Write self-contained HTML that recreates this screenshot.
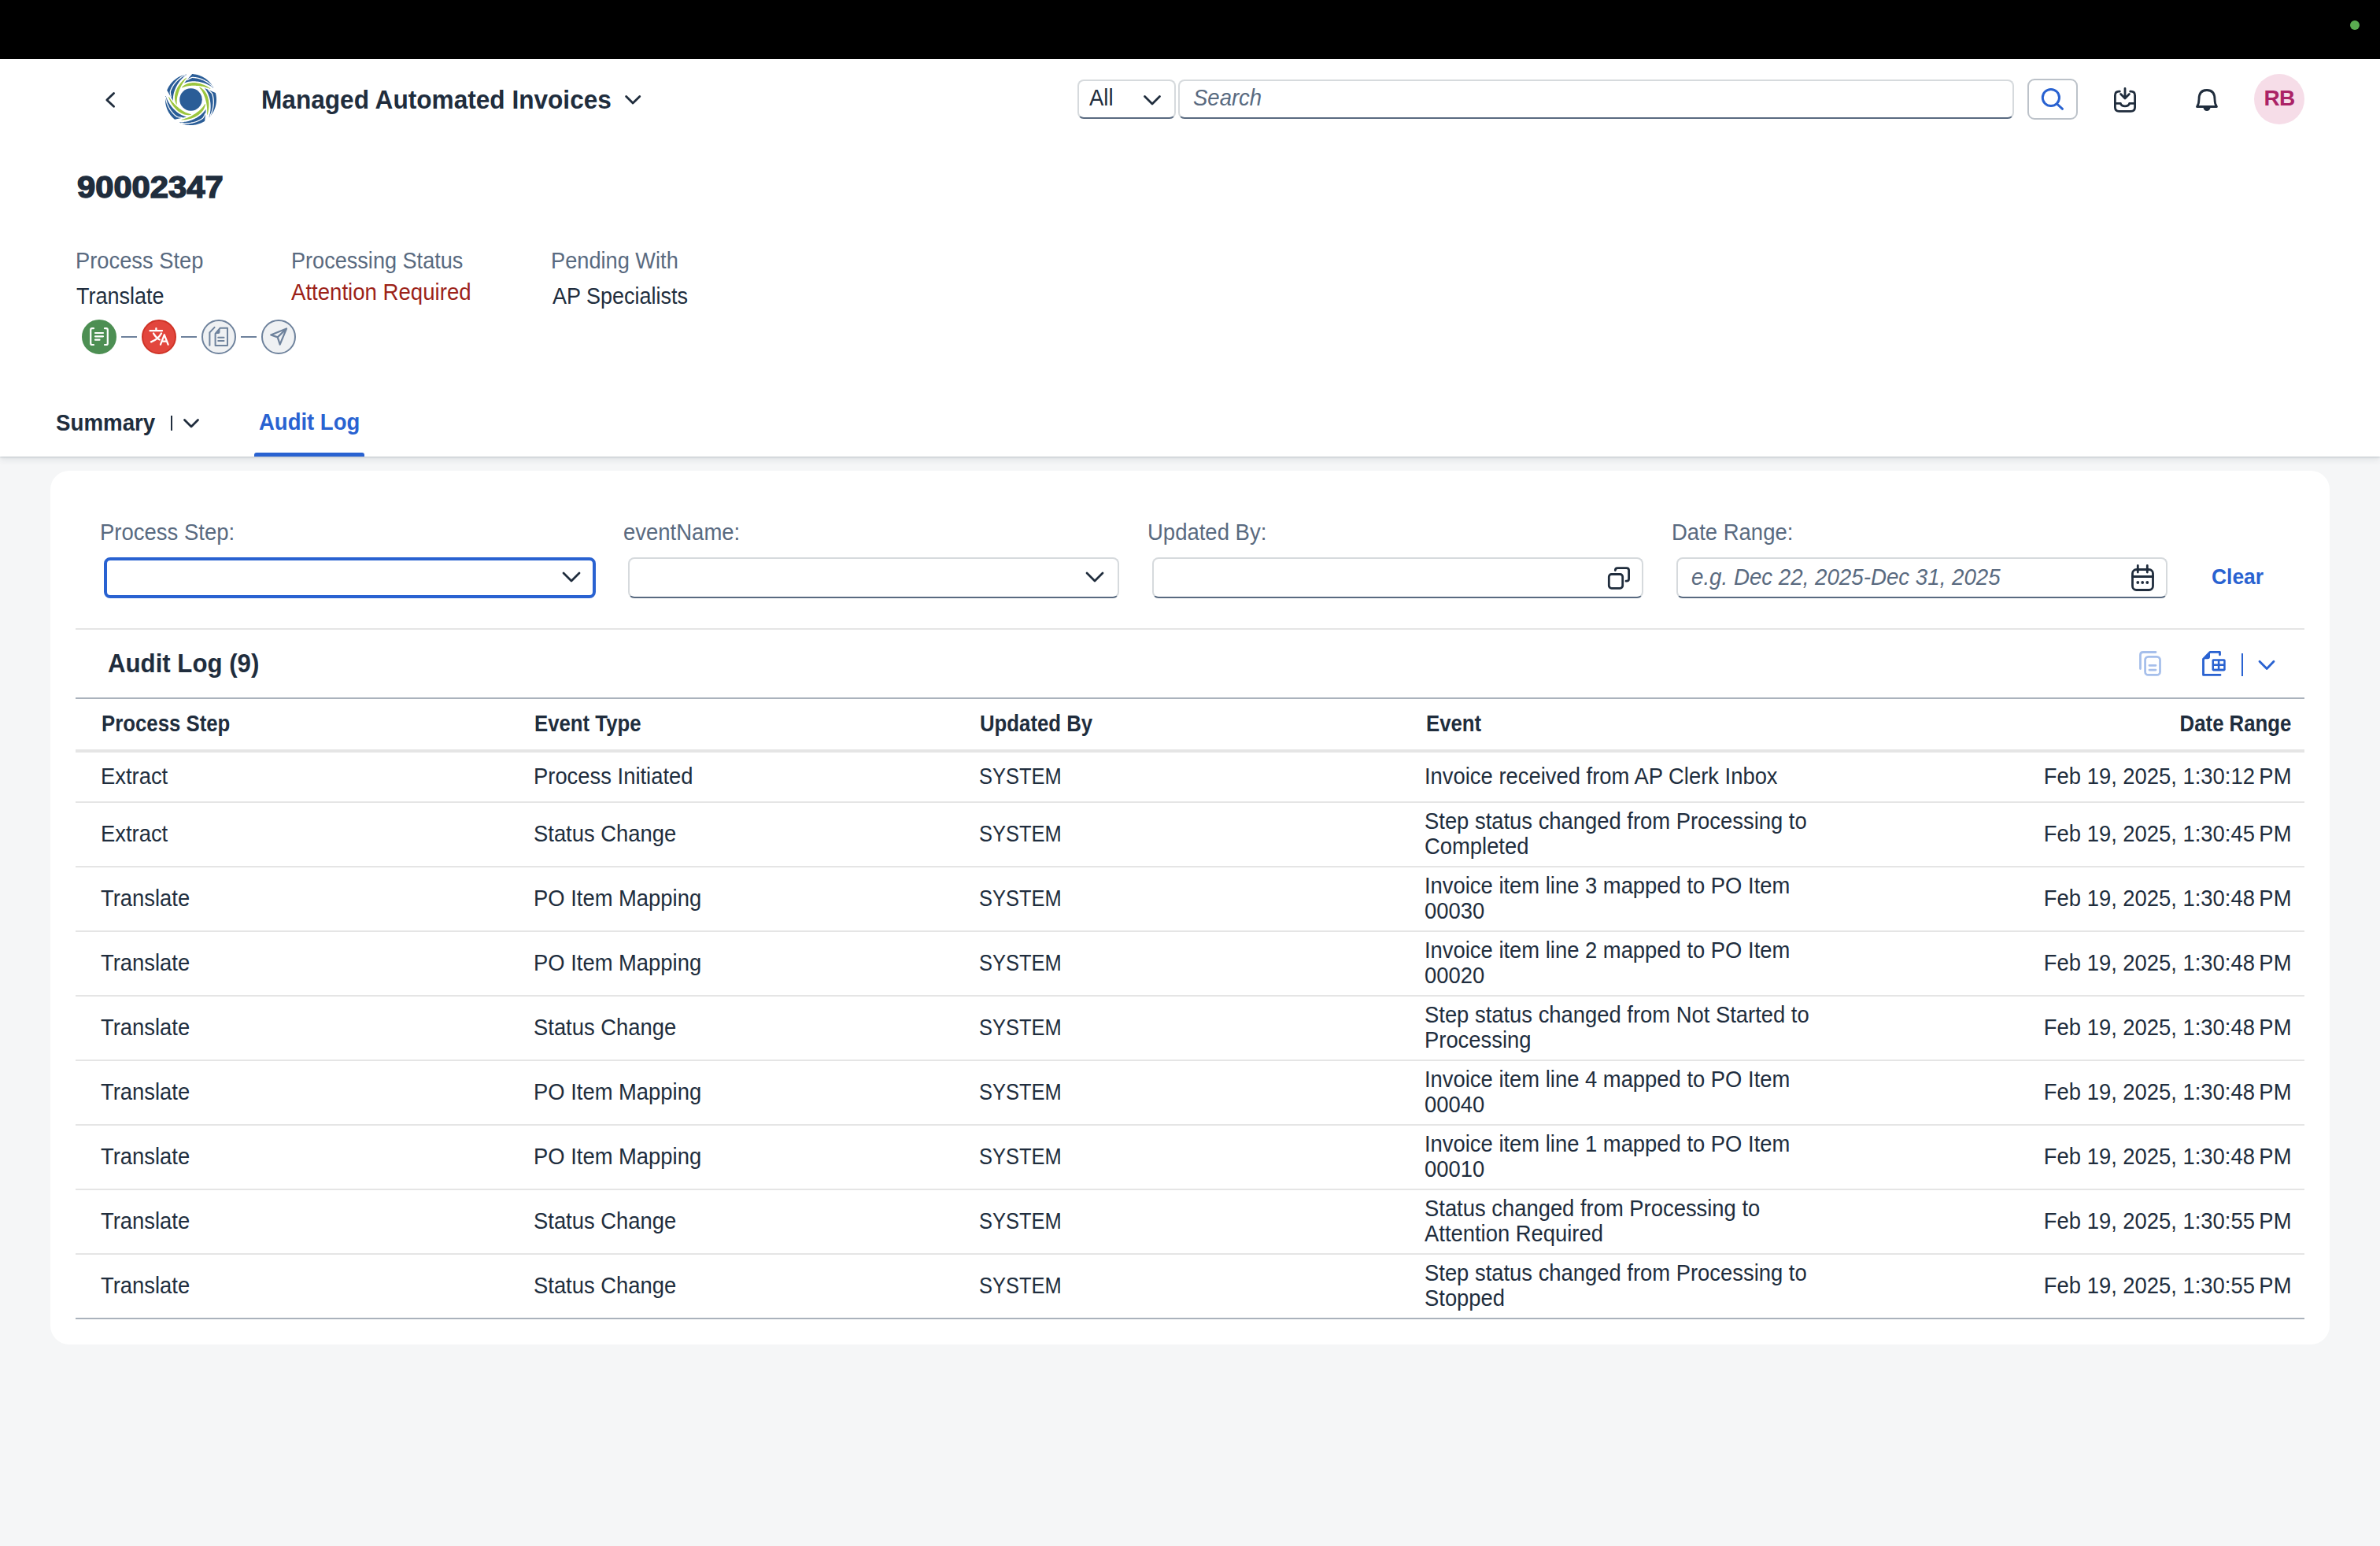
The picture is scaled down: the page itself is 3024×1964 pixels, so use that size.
<!DOCTYPE html>
<html><head><meta charset="utf-8"><title>Managed Automated Invoices - Audit Log</title>
<style>
html,body{margin:0;padding:0;}
body{width:3024px;height:1964px;position:relative;overflow:hidden;background:#f5f6f7;font-family:"Liberation Sans", sans-serif;}
.t{position:absolute;white-space:nowrap;line-height:1;}
svg{overflow:visible}
@media (max-width:1800px){body{zoom:0.5}}
</style></head><body>
<div style="position:absolute;left:0px;top:0px;width:3024px;height:75px;background:#000"></div>
<div style="position:absolute;left:2985.7px;top:25.6px;width:12.8px;height:12.8px;background:#5aab50;border-radius:50%"></div>
<div style="position:absolute;left:0px;top:75px;width:3024px;height:505px;background:#fff;box-shadow:0 1px 2px rgba(34,53,72,0.18),0 4px 8px rgba(34,53,72,0.10)"></div>
<svg style="position:absolute;left:120px;top:100px" width="50" height="50" viewBox="0 0 50 50"><polyline points="24.6,18.4 15.8,27 24.6,35.3" fill="none" stroke="#202d3d" stroke-width="2.8" stroke-linecap="round" stroke-linejoin="round"/></svg>
<svg style="position:absolute;left:209.8px;top:93.5px" width="65" height="65" viewBox="0 0 65 65"><path d="M9.86 34.08 L9.81 33.25 L9.79 32.42 L9.80 31.59 L9.84 30.76 L9.89 29.92 L9.97 29.09 L10.08 28.26 L10.20 27.43 L10.35 26.61 L10.51 25.78 L10.70 24.95 L10.90 24.12 L11.13 23.30 L11.38 22.47 L11.65 21.64 L11.94 20.82 L12.24 19.99 L12.58 19.16 L12.93 18.33 L13.30 17.50 L13.70 16.67 L14.12 15.84 L14.57 15.00 L15.04 14.16 L15.54 13.32 L16.06 12.48 L16.61 11.64 L17.19 10.80 L17.81 9.96 L18.45 9.12 L19.13 8.28 L19.84 7.44 L20.59 6.60 L21.37 5.76 L22.19 4.93 L23.05 4.11 L23.96 3.29 L24.90 2.48 L25.89 1.68 L26.93 0.89 L26.86 0.49 L26.03 0.65 L25.22 0.83 L24.40 1.02 L23.60 1.24 L22.79 1.48 L22.00 1.74 L21.21 2.02 L20.43 2.32 L19.66 2.64 L18.89 2.99 L18.14 3.35 L17.39 3.72 L16.66 4.12 L15.93 4.54 L15.22 4.98 L14.51 5.43 L13.82 5.90 L13.15 6.39 L12.48 6.90 L11.83 7.42 L11.19 7.96 L10.56 8.52 L9.95 9.09 L9.36 9.68 L8.78 10.28 L8.22 10.90 L7.67 11.53 L7.14 12.18 L6.62 12.84 L6.12 13.51 L5.64 14.20 L5.18 14.89 L4.74 15.60 L4.31 16.32 L3.90 17.05 L3.52 17.80 L3.15 18.55 L2.80 19.31 L2.47 20.08 L2.16 20.85 Z" fill="#2a5d97"/><path d="M7.36 28.97 L7.13 28.15 L6.92 27.32 L6.74 26.47 L6.58 25.60 L6.45 24.72 L6.35 23.83 L6.27 22.91 L6.37 22.05 L6.65 21.25 L6.96 20.46 L7.29 19.67 L7.64 18.89 L8.01 18.12 L8.39 17.35 L8.80 16.59 L9.23 15.84 L9.68 15.10 L10.15 14.37 L10.63 13.64 L11.14 12.93 L11.67 12.22 L12.21 11.53 L12.77 10.84 L13.36 10.17 L13.96 9.50 L14.58 8.85 L15.22 8.21 L15.88 7.58 L16.56 6.97 L17.26 6.36 L17.97 5.77 L18.71 5.20 L19.46 4.63 L20.23 4.09 L21.02 3.55 L21.83 3.04 L22.66 2.53 L23.51 2.05 L24.37 1.58 L25.26 1.13" fill="none" stroke="#fff" stroke-width="1.3" stroke-linecap="round"/><path d="M14.28 38.77 L13.83 38.05 L13.45 37.29 L13.12 36.50 L12.83 35.69 L12.58 34.86 L12.38 34.01 L12.21 33.16 L12.09 32.29 L12.01 31.41 L11.96 30.52 L11.96 29.63 L11.99 28.74 L12.06 27.84 L12.16 26.94 L12.30 26.03 L12.48 25.13 L12.69 24.23 L12.93 23.33 L13.21 22.44 L13.52 21.54 L13.87 20.65 L14.25 19.77 L14.65 18.88 L15.10 18.00 L15.57 17.12 L16.08 16.25 L16.61 15.37 L17.19 14.51 L17.79 13.64 L18.43 12.78 L19.11 11.92 L19.82 11.06 L20.57 10.20 L21.36 9.35 L22.19 8.51 L23.07 7.67 L23.99 6.84 L24.96 6.02 L25.98 5.22 L27.05 4.45 L27.15 4.99 L26.20 6.14 L25.31 7.25 L24.49 8.34 L23.72 9.40 L23.02 10.43 L22.36 11.44 L21.76 12.43 L21.20 13.39 L20.68 14.34 L20.20 15.26 L19.75 16.15 L19.34 17.03 L18.95 17.89 L18.58 18.73 L18.24 19.55 L17.92 20.35 L17.62 21.14 L17.34 21.92 L17.07 22.69 L16.81 23.44 L16.57 24.19 L16.35 24.93 L16.13 25.67 L15.93 26.40 L15.74 27.14 L15.56 27.87 L15.40 28.60 L15.25 29.33 L15.11 30.07 L14.99 30.81 L14.89 31.56 L14.80 32.31 L14.74 33.07 L14.69 33.84 L14.66 34.61 L14.65 35.39 L14.66 36.18 L14.69 36.97 L14.74 37.78 L14.79 38.60 Z" fill="#9cc63f"/><path d="M24.00 11.45 L24.77 11.15 L25.56 10.88 L26.35 10.63 L27.16 10.41 L27.96 10.20 L28.78 10.02 L29.60 9.86 L30.43 9.73 L31.26 9.61 L32.10 9.51 L32.94 9.43 L33.79 9.37 L34.65 9.33 L35.51 9.31 L36.38 9.31 L37.26 9.33 L38.14 9.37 L39.03 9.43 L39.93 9.51 L40.83 9.61 L41.75 9.73 L42.67 9.87 L43.60 10.04 L44.54 10.23 L45.49 10.44 L46.46 10.68 L47.43 10.94 L48.41 11.24 L49.40 11.56 L50.40 11.91 L51.41 12.30 L52.43 12.71 L53.45 13.16 L54.49 13.65 L55.53 14.18 L56.59 14.74 L57.64 15.35 L58.71 16.00 L59.77 16.69 L60.84 17.43 L61.20 17.24 L60.79 16.51 L60.37 15.79 L59.93 15.07 L59.48 14.37 L59.00 13.68 L58.51 13.01 L58.00 12.35 L57.47 11.70 L56.93 11.06 L56.37 10.44 L55.79 9.83 L55.20 9.24 L54.59 8.66 L53.97 8.10 L53.34 7.56 L52.69 7.03 L52.02 6.52 L51.35 6.02 L50.66 5.55 L49.96 5.09 L49.25 4.65 L48.53 4.23 L47.80 3.82 L47.05 3.44 L46.30 3.08 L45.54 2.73 L44.77 2.40 L43.99 2.10 L43.20 1.81 L42.41 1.55 L41.61 1.30 L40.80 1.08 L39.99 0.87 L39.17 0.69 L38.35 0.53 L37.53 0.39 L36.70 0.27 L35.87 0.18 L35.04 0.10 L34.20 0.04 Z" fill="#2a5d97"/><path d="M28.09 7.50 L28.80 7.03 L29.52 6.57 L30.27 6.14 L31.05 5.72 L31.85 5.32 L32.67 4.95 L33.51 4.59 L34.37 4.42 L35.21 4.44 L36.06 4.49 L36.91 4.56 L37.76 4.65 L38.61 4.76 L39.46 4.89 L40.31 5.05 L41.15 5.22 L42.00 5.42 L42.84 5.64 L43.68 5.88 L44.51 6.14 L45.35 6.42 L46.18 6.72 L47.00 7.05 L47.83 7.39 L48.64 7.76 L49.45 8.15 L50.26 8.56 L51.06 8.99 L51.86 9.45 L52.65 9.93 L53.43 10.42 L54.21 10.94 L54.97 11.49 L55.73 12.05 L56.48 12.64 L57.23 13.25 L57.96 13.88 L58.68 14.54 L59.39 15.22 L60.09 15.92" fill="none" stroke="#fff" stroke-width="1.3" stroke-linecap="round"/><path d="M20.90 17.11 L21.46 16.46 L22.06 15.86 L22.71 15.30 L23.39 14.78 L24.10 14.29 L24.84 13.83 L25.61 13.41 L26.40 13.02 L27.21 12.67 L28.03 12.36 L28.88 12.07 L29.74 11.83 L30.62 11.61 L31.51 11.44 L32.41 11.29 L33.32 11.18 L34.24 11.10 L35.17 11.06 L36.11 11.05 L37.06 11.07 L38.01 11.12 L38.97 11.20 L39.94 11.32 L40.91 11.47 L41.89 11.65 L42.88 11.86 L43.88 12.10 L44.88 12.37 L45.89 12.68 L46.91 13.03 L47.94 13.40 L48.97 13.81 L50.02 14.26 L51.07 14.75 L52.13 15.28 L53.20 15.86 L54.27 16.48 L55.35 17.14 L56.43 17.86 L57.49 18.65 L57.01 18.91 L55.62 18.36 L54.29 17.86 L53.00 17.41 L51.76 17.01 L50.56 16.66 L49.40 16.35 L48.27 16.08 L47.18 15.85 L46.12 15.65 L45.10 15.47 L44.11 15.33 L43.14 15.20 L42.21 15.10 L41.30 15.01 L40.41 14.94 L39.55 14.88 L38.70 14.84 L37.87 14.81 L37.06 14.79 L36.27 14.78 L35.48 14.79 L34.70 14.80 L33.94 14.82 L33.18 14.86 L32.42 14.90 L31.67 14.96 L30.93 15.03 L30.18 15.12 L29.44 15.21 L28.69 15.33 L27.95 15.46 L27.21 15.61 L26.46 15.78 L25.72 15.97 L24.98 16.18 L24.23 16.42 L23.49 16.67 L22.74 16.95 L21.99 17.24 L21.23 17.54 Z" fill="#9cc63f"/><path d="M49.89 17.91 L50.41 18.56 L50.92 19.22 L51.40 19.90 L51.86 20.59 L52.30 21.30 L52.73 22.02 L53.13 22.75 L53.52 23.49 L53.89 24.25 L54.24 25.01 L54.58 25.79 L54.89 26.58 L55.20 27.39 L55.48 28.20 L55.75 29.03 L56.00 29.86 L56.24 30.71 L56.46 31.58 L56.66 32.46 L56.85 33.35 L57.01 34.26 L57.16 35.18 L57.29 36.12 L57.41 37.07 L57.50 38.04 L57.57 39.03 L57.61 40.03 L57.64 41.06 L57.64 42.10 L57.61 43.16 L57.56 44.24 L57.48 45.34 L57.36 46.45 L57.22 47.59 L57.04 48.74 L56.83 49.92 L56.58 51.11 L56.29 52.32 L55.96 53.55 L55.59 54.80 L55.88 55.08 L56.45 54.47 L57.01 53.84 L57.55 53.21 L58.08 52.55 L58.58 51.89 L59.07 51.21 L59.55 50.52 L60.00 49.82 L60.44 49.10 L60.86 48.38 L61.26 47.65 L61.64 46.90 L62.00 46.15 L62.34 45.38 L62.66 44.61 L62.96 43.83 L63.24 43.04 L63.50 42.25 L63.74 41.44 L63.96 40.64 L64.16 39.82 L64.34 39.01 L64.50 38.19 L64.63 37.36 L64.75 36.53 L64.84 35.70 L64.91 34.87 L64.96 34.03 L64.99 33.19 L65.00 32.36 L64.99 31.52 L64.95 30.69 L64.89 29.85 L64.81 29.02 L64.71 28.19 L64.59 27.36 L64.45 26.54 L64.28 25.72 L64.10 24.90 L63.89 24.09 Z" fill="#2a5d97"/><path d="M54.92 20.58 L55.58 21.11 L56.24 21.66 L56.88 22.24 L57.52 22.85 L58.14 23.48 L58.76 24.15 L59.35 24.84 L59.79 25.60 L60.02 26.41 L60.24 27.23 L60.44 28.06 L60.61 28.90 L60.77 29.74 L60.91 30.59 L61.02 31.44 L61.12 32.30 L61.19 33.16 L61.24 34.03 L61.27 34.90 L61.29 35.78 L61.27 36.66 L61.24 37.54 L61.19 38.43 L61.11 39.32 L61.02 40.21 L60.90 41.10 L60.76 42.00 L60.59 42.89 L60.41 43.79 L60.20 44.69 L59.96 45.58 L59.71 46.48 L59.43 47.38 L59.13 48.28 L58.80 49.17 L58.45 50.07 L58.07 50.96 L57.67 51.85 L57.25 52.74 L56.80 53.62" fill="none" stroke="#fff" stroke-width="1.3" stroke-linecap="round"/><path d="M43.55 16.71 L44.34 17.04 L45.10 17.43 L45.83 17.87 L46.54 18.36 L47.23 18.89 L47.89 19.45 L48.53 20.05 L49.14 20.68 L49.72 21.34 L50.28 22.03 L50.81 22.75 L51.31 23.49 L51.78 24.26 L52.23 25.05 L52.64 25.86 L53.03 26.69 L53.39 27.54 L53.72 28.41 L54.02 29.30 L54.29 30.21 L54.54 31.13 L54.75 32.07 L54.94 33.03 L55.10 34.00 L55.24 34.99 L55.34 36.00 L55.42 37.02 L55.47 38.06 L55.49 39.11 L55.47 40.19 L55.43 41.28 L55.36 42.39 L55.26 43.53 L55.12 44.68 L54.94 45.85 L54.73 47.04 L54.47 48.26 L54.17 49.49 L53.81 50.74 L53.40 51.99 L53.00 51.61 L53.09 50.12 L53.16 48.70 L53.19 47.34 L53.18 46.03 L53.14 44.78 L53.08 43.58 L52.99 42.43 L52.87 41.32 L52.74 40.25 L52.59 39.22 L52.42 38.23 L52.24 37.28 L52.05 36.35 L51.85 35.46 L51.65 34.60 L51.43 33.76 L51.21 32.94 L50.98 32.15 L50.75 31.37 L50.51 30.61 L50.27 29.86 L50.02 29.13 L49.76 28.40 L49.49 27.69 L49.21 26.99 L48.93 26.29 L48.63 25.60 L48.32 24.92 L47.99 24.24 L47.65 23.57 L47.30 22.91 L46.93 22.25 L46.53 21.59 L46.12 20.95 L45.69 20.30 L45.24 19.67 L44.77 19.04 L44.28 18.42 L43.76 17.79 L43.24 17.16 Z" fill="#9cc63f"/><path d="M51.75 44.53 L51.30 45.23 L50.82 45.91 L50.33 46.58 L49.81 47.23 L49.27 47.87 L48.72 48.50 L48.15 49.11 L47.56 49.71 L46.96 50.29 L46.34 50.86 L45.70 51.42 L45.05 51.97 L44.38 52.51 L43.69 53.03 L42.99 53.54 L42.27 54.04 L41.53 54.53 L40.78 55.00 L40.01 55.47 L39.21 55.92 L38.40 56.36 L37.57 56.78 L36.72 57.20 L35.85 57.60 L34.95 57.99 L34.04 58.36 L33.09 58.71 L32.13 59.05 L31.14 59.37 L30.12 59.68 L29.08 59.96 L28.01 60.22 L26.91 60.46 L25.79 60.67 L24.63 60.86 L23.45 61.02 L22.24 61.15 L21.00 61.25 L19.73 61.32 L18.43 61.35 L18.25 61.71 L19.01 62.07 L19.78 62.41 L20.55 62.72 L21.33 63.02 L22.12 63.30 L22.92 63.55 L23.72 63.79 L24.53 64.01 L25.34 64.20 L26.16 64.38 L26.98 64.53 L27.81 64.66 L28.64 64.77 L29.47 64.86 L30.30 64.93 L31.14 64.97 L31.98 65.00 L32.81 65.00 L33.65 64.98 L34.48 64.94 L35.32 64.88 L36.15 64.79 L36.98 64.69 L37.81 64.56 L38.63 64.42 L39.45 64.25 L40.27 64.06 L41.08 63.85 L41.88 63.62 L42.68 63.37 L43.47 63.09 L44.25 62.80 L45.03 62.49 L45.80 62.16 L46.56 61.80 L47.31 61.43 L48.05 61.04 L48.77 60.63 L49.49 60.20 L50.20 59.76 Z" fill="#2a5d97"/><path d="M50.76 50.14 L50.47 50.93 L50.15 51.72 L49.80 52.52 L49.41 53.31 L49.00 54.10 L48.56 54.89 L48.09 55.67 L47.50 56.32 L46.80 56.79 L46.08 57.26 L45.35 57.70 L44.61 58.13 L43.86 58.53 L43.10 58.93 L42.32 59.30 L41.53 59.65 L40.73 59.99 L39.93 60.31 L39.11 60.61 L38.28 60.89 L37.44 61.15 L36.59 61.39 L35.73 61.62 L34.86 61.82 L33.98 62.00 L33.10 62.17 L32.20 62.31 L31.30 62.43 L30.39 62.53 L29.47 62.61 L28.54 62.66 L27.61 62.70 L26.67 62.71 L25.72 62.70 L24.77 62.66 L23.81 62.61 L22.85 62.52 L21.88 62.42 L20.90 62.29 L19.92 62.13" fill="none" stroke="#fff" stroke-width="1.3" stroke-linecap="round"/><path d="M50.93 38.14 L50.86 38.98 L50.72 39.83 L50.53 40.66 L50.29 41.49 L50.00 42.30 L49.67 43.10 L49.30 43.89 L48.89 44.67 L48.44 45.43 L47.95 46.17 L47.43 46.90 L46.88 47.60 L46.30 48.29 L45.68 48.96 L45.04 49.60 L44.37 50.23 L43.67 50.83 L42.94 51.42 L42.19 51.98 L41.41 52.52 L40.61 53.04 L39.78 53.53 L38.93 54.01 L38.06 54.46 L37.16 54.89 L36.23 55.30 L35.29 55.69 L34.31 56.06 L33.31 56.40 L32.29 56.73 L31.24 57.02 L30.16 57.30 L29.05 57.55 L27.91 57.77 L26.74 57.97 L25.54 58.13 L24.30 58.26 L23.04 58.36 L21.74 58.41 L20.42 58.40 L20.66 57.90 L22.11 57.53 L23.48 57.15 L24.78 56.76 L26.02 56.35 L27.20 55.93 L28.32 55.49 L29.39 55.05 L30.41 54.60 L31.38 54.14 L32.32 53.68 L33.21 53.22 L34.06 52.75 L34.88 52.29 L35.66 51.82 L36.42 51.36 L37.15 50.89 L37.86 50.43 L38.55 49.97 L39.22 49.51 L39.87 49.05 L40.50 48.58 L41.12 48.12 L41.73 47.65 L42.32 47.17 L42.91 46.69 L43.48 46.20 L44.04 45.71 L44.60 45.20 L45.14 44.68 L45.67 44.15 L46.20 43.61 L46.71 43.05 L47.21 42.48 L47.70 41.89 L48.18 41.28 L48.64 40.65 L49.09 40.01 L49.53 39.35 L49.97 38.67 L50.41 37.98 Z" fill="#9cc63f"/><path d="M27.01 54.53 L26.20 54.31 L25.41 54.07 L24.62 53.80 L23.84 53.51 L23.06 53.20 L22.30 52.87 L21.54 52.52 L20.79 52.14 L20.05 51.75 L19.31 51.34 L18.58 50.90 L17.86 50.45 L17.14 49.98 L16.44 49.49 L15.73 48.98 L15.03 48.45 L14.34 47.90 L13.66 47.33 L12.98 46.74 L12.30 46.12 L11.63 45.49 L10.97 44.83 L10.31 44.15 L9.66 43.44 L9.02 42.71 L8.38 41.95 L7.75 41.17 L7.13 40.35 L6.52 39.51 L5.92 38.64 L5.33 37.73 L4.75 36.80 L4.18 35.83 L3.63 34.82 L3.10 33.78 L2.58 32.71 L2.08 31.60 L1.60 30.45 L1.14 29.26 L0.71 28.03 L0.32 27.98 L0.21 28.81 L0.13 29.64 L0.06 30.47 L0.02 31.31 L0.00 32.15 L0.00 32.98 L0.03 33.82 L0.07 34.65 L0.14 35.49 L0.23 36.32 L0.33 37.15 L0.46 37.98 L0.62 38.80 L0.79 39.62 L0.98 40.43 L1.20 41.24 L1.43 42.04 L1.69 42.84 L1.96 43.63 L2.26 44.41 L2.58 45.19 L2.91 45.95 L3.27 46.71 L3.65 47.46 L4.04 48.19 L4.45 48.92 L4.89 49.64 L5.34 50.34 L5.80 51.04 L6.29 51.72 L6.79 52.39 L7.31 53.04 L7.85 53.68 L8.40 54.31 L8.97 54.92 L9.56 55.52 L10.16 56.10 L10.77 56.67 L11.40 57.22 L12.05 57.76 Z" fill="#2a5d97"/><path d="M21.37 55.32 L20.52 55.29 L19.67 55.22 L18.81 55.13 L17.93 55.02 L17.05 54.87 L16.17 54.69 L15.28 54.48 L14.48 54.12 L13.81 53.60 L13.15 53.07 L12.51 52.51 L11.87 51.94 L11.25 51.35 L10.64 50.74 L10.05 50.12 L9.47 49.48 L8.90 48.83 L8.35 48.16 L7.81 47.47 L7.28 46.77 L6.78 46.05 L6.28 45.32 L5.81 44.57 L5.34 43.80 L4.90 43.03 L4.47 42.23 L4.06 41.43 L3.67 40.61 L3.29 39.77 L2.93 38.92 L2.59 38.06 L2.27 37.18 L1.97 36.29 L1.69 35.39 L1.42 34.47 L1.18 33.54 L0.96 32.60 L0.76 31.64 L0.59 30.67 L0.43 29.69" fill="none" stroke="#fff" stroke-width="1.3" stroke-linecap="round"/><path d="M32.84 51.77 L32.01 51.97 L31.16 52.10 L30.31 52.17 L29.45 52.19 L28.59 52.17 L27.72 52.11 L26.85 52.00 L25.99 51.84 L25.13 51.65 L24.27 51.42 L23.42 51.15 L22.58 50.85 L21.75 50.50 L20.92 50.12 L20.11 49.71 L19.31 49.27 L18.52 48.79 L17.74 48.28 L16.97 47.73 L16.22 47.16 L15.48 46.56 L14.75 45.93 L14.03 45.26 L13.33 44.57 L12.64 43.85 L11.97 43.10 L11.30 42.32 L10.65 41.50 L10.02 40.66 L9.39 39.79 L8.78 38.88 L8.19 37.93 L7.61 36.96 L7.05 35.94 L6.50 34.89 L5.97 33.80 L5.46 32.67 L4.98 31.49 L4.54 30.27 L4.14 29.02 L4.68 29.08 L5.48 30.35 L6.27 31.54 L7.04 32.66 L7.81 33.71 L8.58 34.70 L9.34 35.63 L10.09 36.51 L10.84 37.34 L11.57 38.13 L12.30 38.87 L13.02 39.57 L13.72 40.24 L14.42 40.87 L15.10 41.48 L15.78 42.06 L16.44 42.61 L17.10 43.14 L17.75 43.65 L18.40 44.14 L19.04 44.62 L19.68 45.08 L20.31 45.52 L20.95 45.96 L21.58 46.38 L22.22 46.78 L22.86 47.18 L23.51 47.56 L24.16 47.93 L24.82 48.28 L25.49 48.63 L26.17 48.96 L26.86 49.27 L27.56 49.57 L28.27 49.86 L28.99 50.12 L29.73 50.37 L30.49 50.60 L31.25 50.82 L32.03 51.02 L32.83 51.22 Z" fill="#9cc63f"/><circle cx="32.5" cy="32.5" r="14.3" fill="#2a5d97"/></svg>
<div class="t" style="left:332px;top:109.65px;font-size:33.50px;color:#202d3d;font-weight:700;transform:scaleX(0.9434);transform-origin:left top;">Managed Automated Invoices</div>
<svg style="position:absolute;left:790px;top:115px" width="28" height="24" viewBox="0 0 28 24"><polyline points="5.6,7.4 14.1,16.1 22.8,7.4" fill="none" stroke="#202d3d" stroke-width="2.8" stroke-linecap="round" stroke-linejoin="round"/></svg>
<div style="position:absolute;left:1368.5px;top:100.5px;width:125.5px;height:50.5px;box-sizing:border-box;background:#fff;border:2px solid #d6dadd;border-bottom:2px solid #596a80;border-radius:8px"></div>
<div class="t" style="left:1384px;top:110.32px;font-size:29.15px;color:#202d3d;font-weight:400;transform:scaleX(0.9434);transform-origin:left top;">All</div>
<svg style="position:absolute;left:1448px;top:112px" width="32" height="28" viewBox="0 0 32 28"><polyline points="6.5,10.5 16,20 25.5,10.5" fill="none" stroke="#202d3d" stroke-width="2.8" stroke-linecap="round" stroke-linejoin="round"/></svg>
<div style="position:absolute;left:1497px;top:100.5px;width:1062px;height:50.5px;box-sizing:border-box;background:#fff;border:2px solid #d6dadd;border-bottom:2px solid #596a80;border-radius:8px"></div>
<div class="t" style="left:1516px;top:110.32px;font-size:29.15px;color:#596a80;font-weight:400;font-style:italic;transform:scaleX(0.9434);transform-origin:left top;">Search</div>
<div style="position:absolute;left:2576px;top:100px;width:64px;height:52px;box-sizing:border-box;background:#fff;border:2px solid #bcc2c9;border-radius:9px"></div>
<svg style="position:absolute;left:2586px;top:104px" width="44" height="44" viewBox="0 0 44 44"><circle cx="19.9" cy="20" r="10.6" fill="none" stroke="#2962d1" stroke-width="3"/><line x1="27.6" y1="28" x2="34.5" y2="34.3" stroke="#2962d1" stroke-width="3" stroke-linecap="round"/></svg>
<svg style="position:absolute;left:2680px;top:106px" width="40" height="40" viewBox="0 0 40 40"><path d="M13.3 10.2 H12.4 Q7.4 10.2 7.4 15.2 V30.3 Q7.4 35.3 12.4 35.3 H27.6 Q32.6 35.3 32.6 30.3 V15.2 Q32.6 10.2 27.6 10.2 H26.7" fill="none" stroke="#202d3d" stroke-width="2.8" stroke-linecap="round"/><path d="M7.4 25.3 H14.2 Q15.5 28.9 20 28.9 Q24.5 28.9 25.8 25.3 H32.6" fill="none" stroke="#202d3d" stroke-width="2.8"/><path d="M20 6.4 V19 M14.6 13.6 L20 19 L25.4 13.6" fill="none" stroke="#202d3d" stroke-width="2.8" stroke-linecap="round" stroke-linejoin="round"/></svg>
<svg style="position:absolute;left:2784px;top:106px" width="40" height="40" viewBox="0 0 40 40"><path d="M20 8.5 Q10 8.5 10 20 Q10 26 7.5 29.5 H32.5 Q30 26 30 20 Q30 8.5 20 8.5 Z" fill="none" stroke="#202d3d" stroke-width="2.8" stroke-linejoin="round"/><path d="M15.5 31 Q16.5 35 20 35 Q23.5 35 24.5 31 Z" fill="#202d3d"/></svg>
<div style="position:absolute;left:2864px;top:94px;width:64px;height:64px;background:#f6dde8;border-radius:50%"></div>
<div class="t" style="left:2896px;top:111.30px;font-size:28.00px;color:#ab2266;font-weight:700;transform:translateX(-50%);letter-spacing:-0.8px;">RB</div>
<div class="t" style="left:97.5px;top:218.29px;font-size:39.00px;color:#202d3d;font-weight:700;transform:scaleX(1.0700);transform-origin:left top;-webkit-text-stroke:1.5px #202d3d;">90002347</div>
<div class="t" style="left:95.5px;top:317.20px;font-size:28.94px;color:#596a80;font-weight:400;transform:scaleX(0.9434);transform-origin:left top;">Process Step</div>
<div class="t" style="left:96.8px;top:362.27px;font-size:28.62px;color:#202d3d;font-weight:400;transform:scaleX(0.9434);transform-origin:left top;">Translate</div>
<div class="t" style="left:369.6px;top:317.38px;font-size:28.73px;color:#596a80;font-weight:400;transform:scaleX(0.9434);transform-origin:left top;">Processing Status</div>
<div class="t" style="left:370px;top:357.23px;font-size:29.26px;color:#9c2218;font-weight:400;transform:scaleX(0.9434);transform-origin:left top;">Attention Required</div>
<div class="t" style="left:700.2px;top:317.29px;font-size:28.83px;color:#596a80;font-weight:400;transform:scaleX(0.9434);transform-origin:left top;">Pending With</div>
<div class="t" style="left:701.5px;top:362.27px;font-size:28.62px;color:#202d3d;font-weight:400;transform:scaleX(0.9434);transform-origin:left top;">AP Specialists</div>
<svg style="position:absolute;left:102px;top:404px" width="48" height="48" viewBox="0 0 48 48"><circle cx="24" cy="24" r="21" fill="#4d8f53" stroke="#4d8f53" stroke-width="2"/><path d="M17 13.2 H15 Q13.2 13.2 13.2 15 V32.2 Q13.2 34 15 34 H17 M31 13.2 H33 Q34.8 13.2 34.8 15 V32.2 Q34.8 34 33 34 H31" fill="none" stroke="#fff" stroke-width="2.2" stroke-linecap="round" stroke-linejoin="round"/><path d="M19 19 H29 M19 23.3 H29 M19 27.7 H24.5" fill="none" stroke="#fff" stroke-width="2.2" stroke-linecap="round"/></svg>
<svg style="position:absolute;left:178px;top:404px" width="48" height="48" viewBox="0 0 48 48"><circle cx="24" cy="24" r="21" fill="#e2463d" stroke="#cf3326" stroke-width="2"/><path d="M12.5 16.2 H28 M20.4 13.2 V16 M27 19.5 Q23 27 14 30.4 M17 19.5 Q20 25 24.7 27.4" fill="none" stroke="#fff" stroke-width="2.3" stroke-linecap="round"/><path d="M26 33.7 L30.8 21.3 L35.6 33.7 M27.6 29.6 H34" fill="none" stroke="#fff" stroke-width="2.3" stroke-linecap="round" stroke-linejoin="round"/></svg>
<svg style="position:absolute;left:254px;top:404px" width="48" height="48" viewBox="0 0 48 48"><circle cx="24" cy="24" r="21" fill="#eff1f3" stroke="#6e829c" stroke-width="2"/><path d="M12.4 34.8 V18.3 L18.6 11.9" fill="none" stroke="#6e829c" stroke-width="2" stroke-linecap="round"/><path d="M19.6 20 L25.5 12.8 H35 V35 H19.6 Z" fill="none" stroke="#6e829c" stroke-width="2" stroke-linejoin="round"/><path d="M19.6 20 H23.5 Q25.5 20 25.5 18 V12.8 Z" fill="#6e829c"/><path d="M23.2 24.7 H30.5 M23.2 29 H30.5" fill="none" stroke="#6e829c" stroke-width="2" stroke-linecap="round"/></svg>
<svg style="position:absolute;left:330px;top:404px" width="48" height="48" viewBox="0 0 48 48"><circle cx="24" cy="24" r="21" fill="#eff1f3" stroke="#6e829c" stroke-width="2"/><path d="M14.2 21.4 L34 13.5 L25.7 33.7 L22.7 24.4 Z M22.7 24.4 L34 13.5" fill="none" stroke="#6e829c" stroke-width="2.2" stroke-linejoin="round"/></svg>
<div style="position:absolute;left:154px;top:427px;width:20px;height:2px;background:#6e829c"></div>
<div style="position:absolute;left:230px;top:427px;width:20px;height:2px;background:#6e829c"></div>
<div style="position:absolute;left:306px;top:427px;width:20px;height:2px;background:#6e829c"></div>
<div class="t" style="left:70.5px;top:522.15px;font-size:29.36px;color:#202d3d;font-weight:700;transform:scaleX(0.9434);transform-origin:left top;">Summary</div>
<div style="position:absolute;left:216.5px;top:528px;width:2.2px;height:19px;background:#202d3d"></div>
<svg style="position:absolute;left:228px;top:524px" width="30" height="28" viewBox="0 0 30 28"><polyline points="6.5,9.5 15,18 23.5,9.5" fill="none" stroke="#202d3d" stroke-width="2.8" stroke-linecap="round" stroke-linejoin="round"/></svg>
<div class="t" style="left:329px;top:522.32px;font-size:29.15px;color:#2962d1;font-weight:700;transform:scaleX(0.9434);transform-origin:left top;">Audit Log</div>
<div style="position:absolute;left:322.6px;top:575px;width:140.4px;height:5px;background:#2962d1;border-radius:3px 3px 0 0"></div>
<div style="position:absolute;left:64px;top:598px;width:2896px;height:1110px;background:#fff;border-radius:24px"></div>
<div class="t" style="left:127.00000000000001px;top:662.32px;font-size:29.15px;color:#596a80;font-weight:400;transform:scaleX(0.9434);transform-origin:left top;">Process Step:</div>
<div class="t" style="left:791.8000000000001px;top:662.32px;font-size:29.15px;color:#596a80;font-weight:400;transform:scaleX(0.9434);transform-origin:left top;">eventName:</div>
<div class="t" style="left:1458.0px;top:662.32px;font-size:29.15px;color:#596a80;font-weight:400;transform:scaleX(0.9434);transform-origin:left top;">Updated By:</div>
<div class="t" style="left:2124.0px;top:662.32px;font-size:29.15px;color:#596a80;font-weight:400;transform:scaleX(0.9434);transform-origin:left top;">Date Range:</div>
<div style="position:absolute;left:132px;top:708px;width:625px;height:52px;box-sizing:border-box;background:#fff;border:4px solid #2962d1;border-radius:8px"></div>
<div style="position:absolute;left:798px;top:708px;width:624px;height:52px;box-sizing:border-box;background:#fff;border:2px solid #d6dadd;border-bottom:2px solid #596a80;border-radius:8px"></div>
<div style="position:absolute;left:1464px;top:708px;width:624px;height:52px;box-sizing:border-box;background:#fff;border:2px solid #d6dadd;border-bottom:2px solid #596a80;border-radius:8px"></div>
<div style="position:absolute;left:2130px;top:708px;width:624px;height:52px;box-sizing:border-box;background:#fff;border:2px solid #d6dadd;border-bottom:2px solid #596a80;border-radius:8px"></div>
<svg style="position:absolute;left:709.5px;top:718px" width="32" height="32" viewBox="0 0 32 32"><polyline points="6,10 16,20 26,10" fill="none" stroke="#202d3d" stroke-width="2.8" stroke-linecap="round" stroke-linejoin="round"/></svg>
<svg style="position:absolute;left:1375px;top:718px" width="32" height="32" viewBox="0 0 32 32"><polyline points="6,10 16,20 26,10" fill="none" stroke="#202d3d" stroke-width="2.8" stroke-linecap="round" stroke-linejoin="round"/></svg>
<svg style="position:absolute;left:2036px;top:714px" width="40" height="40" viewBox="0 0 40 40"><rect x="8.3" y="15.5" width="17.4" height="17.8" rx="3.2" fill="none" stroke="#202d3d" stroke-width="2.8"/><path d="M16.3 10.5 Q16.3 7.6 19.3 7.6 H30.7 Q33.6 7.6 33.6 10.5 V21.3 Q33.6 24.2 30.7 24.2 H30" fill="none" stroke="#202d3d" stroke-width="2.8" stroke-linecap="round"/></svg>
<div class="t" style="left:2148.8px;top:718.15px;font-size:29.36px;color:#596a80;font-weight:400;font-style:italic;transform:scaleX(0.9434);transform-origin:left top;">e.g. Dec 22, 2025-Dec 31, 2025</div>
<svg style="position:absolute;left:2702px;top:712px" width="40" height="42" viewBox="0 0 40 42"><rect x="7.5" y="11.5" width="26" height="26" rx="5" fill="none" stroke="#202d3d" stroke-width="2.8"/><path d="M7.5 20.5 H33.5 M14.3 6.5 V15 M26.3 6.5 V15" fill="none" stroke="#202d3d" stroke-width="2.8" stroke-linecap="round"/><circle cx="14.3" cy="28" r="1.9" fill="#202d3d"/><circle cx="20.2" cy="28" r="1.9" fill="#202d3d"/><circle cx="26.3" cy="28" r="1.9" fill="#202d3d"/></svg>
<div class="t" style="left:2810px;top:719.31px;font-size:27.98px;color:#2962d1;font-weight:700;transform:scaleX(0.9434);transform-origin:left top;">Clear</div>
<div style="position:absolute;left:96px;top:798px;width:2832px;height:2px;background:#e5e5e5"></div>
<div class="t" style="left:136.6px;top:826.00px;font-size:33.07px;color:#202d3d;font-weight:700;transform:scaleX(0.9434);transform-origin:left top;">Audit Log (9)</div>
<svg style="position:absolute;left:2712px;top:822px" width="40" height="42" viewBox="0 0 40 42"><path d="M7.5 27.5 V10 Q7.5 6.5 11 6.5 H27" fill="none" stroke="#a6bfeb" stroke-width="2.8" stroke-linecap="round"/><rect x="13.6" y="12.3" width="18.9" height="23.1" rx="4" fill="none" stroke="#a6bfeb" stroke-width="2.8"/><path d="M19 23.3 H27 M19 29.1 H27" fill="none" stroke="#a6bfeb" stroke-width="2.8" stroke-linecap="round"/></svg>
<svg style="position:absolute;left:2792px;top:822px" width="44" height="42" viewBox="0 0 44 42"><path d="M29 35.4 H7.5 V15.3 L16 6.4 H28.5 V9.8" fill="none" stroke="#2962d1" stroke-width="2.8" stroke-linecap="round" stroke-linejoin="round"/><path d="M7.5 15.3 H13 Q16 15.3 16 12.3 V6.4 Z" fill="#2962d1"/><rect x="18.5" y="15.3" width="17.2" height="15.1" rx="1.8" fill="#2962d1"/><rect x="21" y="17.8" width="4.8" height="3.6" fill="#fff"/><rect x="28.4" y="17.8" width="4.8" height="3.6" fill="#fff"/><rect x="21" y="24" width="4.8" height="3.6" fill="#fff"/><rect x="28.4" y="24" width="4.8" height="3.6" fill="#fff"/></svg>
<div style="position:absolute;left:2848px;top:830px;width:2.2px;height:29px;background:#2962d1"></div>
<svg style="position:absolute;left:2864px;top:830px" width="32" height="28" viewBox="0 0 32 28"><polyline points="7,10.2 16.2,19.5 25,10.2" fill="none" stroke="#2962d1" stroke-width="2.8" stroke-linecap="round" stroke-linejoin="round"/></svg>
<div style="position:absolute;left:96px;top:886px;width:2832px;height:2px;background:#aab2bc"></div>
<div class="t" style="left:129.39999999999998px;top:904.77px;font-size:28.62px;color:#202d3d;font-weight:700;transform:scaleX(0.9009);transform-origin:left top;">Process Step</div>
<div class="t" style="left:679.0px;top:904.77px;font-size:28.62px;color:#202d3d;font-weight:700;transform:scaleX(0.9009);transform-origin:left top;">Event Type</div>
<div class="t" style="left:1245.2px;top:904.77px;font-size:28.62px;color:#202d3d;font-weight:700;transform:scaleX(0.9009);transform-origin:left top;">Updated By</div>
<div class="t" style="left:1811.5px;top:904.77px;font-size:28.62px;color:#202d3d;font-weight:700;transform:scaleX(0.9009);transform-origin:left top;">Event</div>
<div class="t" style="right:113px;top:904.77px;font-size:28.62px;color:#202d3d;font-weight:700;transform:scaleX(0.9009);transform-origin:right top;">Date Range</div>
<div style="position:absolute;left:96px;top:952px;width:2832px;height:4px;background:#e5e5e5"></div>
<div class="t" style="left:128.2px;top:971.91px;font-size:29.04px;color:#202d3d;font-weight:400;transform:scaleX(0.9434);transform-origin:left top;">Extract</div>
<div class="t" style="left:677.8px;top:971.91px;font-size:29.04px;color:#202d3d;font-weight:400;transform:scaleX(0.9434);transform-origin:left top;">Process Initiated</div>
<div class="t" style="left:1244px;top:971.91px;font-size:29.04px;color:#202d3d;font-weight:400;transform:scaleX(0.8774);transform-origin:left top;">SYSTEM</div>
<div class="t" style="left:1810.3px;top:971.91px;font-size:29.04px;color:#202d3d;font-weight:400;transform:scaleX(0.9434);transform-origin:left top;">Invoice received from AP Clerk Inbox</div>
<div class="t" style="right:113px;top:971.91px;font-size:29.04px;color:#202d3d;font-weight:400;transform:scaleX(0.9434);transform-origin:right top;">Feb 19, 2025, 1:30:12&#8239;PM</div>
<div style="position:absolute;left:96px;top:1018px;width:2832px;height:2px;background:#e5e5e5"></div>
<div class="t" style="left:128.2px;top:1044.91px;font-size:29.04px;color:#202d3d;font-weight:400;transform:scaleX(0.9434);transform-origin:left top;">Extract</div>
<div class="t" style="left:677.8px;top:1044.91px;font-size:29.04px;color:#202d3d;font-weight:400;transform:scaleX(0.9434);transform-origin:left top;">Status Change</div>
<div class="t" style="left:1244px;top:1044.91px;font-size:29.04px;color:#202d3d;font-weight:400;transform:scaleX(0.8774);transform-origin:left top;">SYSTEM</div>
<div class="t" style="left:1810.3px;top:1029.31px;font-size:29.04px;color:#202d3d;font-weight:400;transform:scaleX(0.9434);transform-origin:left top;">Step status changed from Processing to</div>
<div class="t" style="left:1810.3px;top:1061.41px;font-size:29.04px;color:#202d3d;font-weight:400;transform:scaleX(0.9434);transform-origin:left top;">Completed</div>
<div class="t" style="right:113px;top:1044.91px;font-size:29.04px;color:#202d3d;font-weight:400;transform:scaleX(0.9434);transform-origin:right top;">Feb 19, 2025, 1:30:45&#8239;PM</div>
<div style="position:absolute;left:96px;top:1100px;width:2832px;height:2px;background:#e5e5e5"></div>
<div class="t" style="left:128.2px;top:1126.91px;font-size:29.04px;color:#202d3d;font-weight:400;transform:scaleX(0.9434);transform-origin:left top;">Translate</div>
<div class="t" style="left:677.8px;top:1126.91px;font-size:29.04px;color:#202d3d;font-weight:400;transform:scaleX(0.9434);transform-origin:left top;">PO Item Mapping</div>
<div class="t" style="left:1244px;top:1126.91px;font-size:29.04px;color:#202d3d;font-weight:400;transform:scaleX(0.8774);transform-origin:left top;">SYSTEM</div>
<div class="t" style="left:1810.3px;top:1111.31px;font-size:29.04px;color:#202d3d;font-weight:400;transform:scaleX(0.9434);transform-origin:left top;">Invoice item line 3 mapped to PO Item</div>
<div class="t" style="left:1810.3px;top:1143.41px;font-size:29.04px;color:#202d3d;font-weight:400;transform:scaleX(0.9434);transform-origin:left top;">00030</div>
<div class="t" style="right:113px;top:1126.91px;font-size:29.04px;color:#202d3d;font-weight:400;transform:scaleX(0.9434);transform-origin:right top;">Feb 19, 2025, 1:30:48&#8239;PM</div>
<div style="position:absolute;left:96px;top:1182px;width:2832px;height:2px;background:#e5e5e5"></div>
<div class="t" style="left:128.2px;top:1208.91px;font-size:29.04px;color:#202d3d;font-weight:400;transform:scaleX(0.9434);transform-origin:left top;">Translate</div>
<div class="t" style="left:677.8px;top:1208.91px;font-size:29.04px;color:#202d3d;font-weight:400;transform:scaleX(0.9434);transform-origin:left top;">PO Item Mapping</div>
<div class="t" style="left:1244px;top:1208.91px;font-size:29.04px;color:#202d3d;font-weight:400;transform:scaleX(0.8774);transform-origin:left top;">SYSTEM</div>
<div class="t" style="left:1810.3px;top:1193.31px;font-size:29.04px;color:#202d3d;font-weight:400;transform:scaleX(0.9434);transform-origin:left top;">Invoice item line 2 mapped to PO Item</div>
<div class="t" style="left:1810.3px;top:1225.41px;font-size:29.04px;color:#202d3d;font-weight:400;transform:scaleX(0.9434);transform-origin:left top;">00020</div>
<div class="t" style="right:113px;top:1208.91px;font-size:29.04px;color:#202d3d;font-weight:400;transform:scaleX(0.9434);transform-origin:right top;">Feb 19, 2025, 1:30:48&#8239;PM</div>
<div style="position:absolute;left:96px;top:1264px;width:2832px;height:2px;background:#e5e5e5"></div>
<div class="t" style="left:128.2px;top:1290.91px;font-size:29.04px;color:#202d3d;font-weight:400;transform:scaleX(0.9434);transform-origin:left top;">Translate</div>
<div class="t" style="left:677.8px;top:1290.91px;font-size:29.04px;color:#202d3d;font-weight:400;transform:scaleX(0.9434);transform-origin:left top;">Status Change</div>
<div class="t" style="left:1244px;top:1290.91px;font-size:29.04px;color:#202d3d;font-weight:400;transform:scaleX(0.8774);transform-origin:left top;">SYSTEM</div>
<div class="t" style="left:1810.3px;top:1275.31px;font-size:29.04px;color:#202d3d;font-weight:400;transform:scaleX(0.9434);transform-origin:left top;">Step status changed from Not Started to</div>
<div class="t" style="left:1810.3px;top:1307.41px;font-size:29.04px;color:#202d3d;font-weight:400;transform:scaleX(0.9434);transform-origin:left top;">Processing</div>
<div class="t" style="right:113px;top:1290.91px;font-size:29.04px;color:#202d3d;font-weight:400;transform:scaleX(0.9434);transform-origin:right top;">Feb 19, 2025, 1:30:48&#8239;PM</div>
<div style="position:absolute;left:96px;top:1346px;width:2832px;height:2px;background:#e5e5e5"></div>
<div class="t" style="left:128.2px;top:1372.91px;font-size:29.04px;color:#202d3d;font-weight:400;transform:scaleX(0.9434);transform-origin:left top;">Translate</div>
<div class="t" style="left:677.8px;top:1372.91px;font-size:29.04px;color:#202d3d;font-weight:400;transform:scaleX(0.9434);transform-origin:left top;">PO Item Mapping</div>
<div class="t" style="left:1244px;top:1372.91px;font-size:29.04px;color:#202d3d;font-weight:400;transform:scaleX(0.8774);transform-origin:left top;">SYSTEM</div>
<div class="t" style="left:1810.3px;top:1357.31px;font-size:29.04px;color:#202d3d;font-weight:400;transform:scaleX(0.9434);transform-origin:left top;">Invoice item line 4 mapped to PO Item</div>
<div class="t" style="left:1810.3px;top:1389.41px;font-size:29.04px;color:#202d3d;font-weight:400;transform:scaleX(0.9434);transform-origin:left top;">00040</div>
<div class="t" style="right:113px;top:1372.91px;font-size:29.04px;color:#202d3d;font-weight:400;transform:scaleX(0.9434);transform-origin:right top;">Feb 19, 2025, 1:30:48&#8239;PM</div>
<div style="position:absolute;left:96px;top:1428px;width:2832px;height:2px;background:#e5e5e5"></div>
<div class="t" style="left:128.2px;top:1454.91px;font-size:29.04px;color:#202d3d;font-weight:400;transform:scaleX(0.9434);transform-origin:left top;">Translate</div>
<div class="t" style="left:677.8px;top:1454.91px;font-size:29.04px;color:#202d3d;font-weight:400;transform:scaleX(0.9434);transform-origin:left top;">PO Item Mapping</div>
<div class="t" style="left:1244px;top:1454.91px;font-size:29.04px;color:#202d3d;font-weight:400;transform:scaleX(0.8774);transform-origin:left top;">SYSTEM</div>
<div class="t" style="left:1810.3px;top:1439.31px;font-size:29.04px;color:#202d3d;font-weight:400;transform:scaleX(0.9434);transform-origin:left top;">Invoice item line 1 mapped to PO Item</div>
<div class="t" style="left:1810.3px;top:1471.41px;font-size:29.04px;color:#202d3d;font-weight:400;transform:scaleX(0.9434);transform-origin:left top;">00010</div>
<div class="t" style="right:113px;top:1454.91px;font-size:29.04px;color:#202d3d;font-weight:400;transform:scaleX(0.9434);transform-origin:right top;">Feb 19, 2025, 1:30:48&#8239;PM</div>
<div style="position:absolute;left:96px;top:1510px;width:2832px;height:2px;background:#e5e5e5"></div>
<div class="t" style="left:128.2px;top:1536.91px;font-size:29.04px;color:#202d3d;font-weight:400;transform:scaleX(0.9434);transform-origin:left top;">Translate</div>
<div class="t" style="left:677.8px;top:1536.91px;font-size:29.04px;color:#202d3d;font-weight:400;transform:scaleX(0.9434);transform-origin:left top;">Status Change</div>
<div class="t" style="left:1244px;top:1536.91px;font-size:29.04px;color:#202d3d;font-weight:400;transform:scaleX(0.8774);transform-origin:left top;">SYSTEM</div>
<div class="t" style="left:1810.3px;top:1521.31px;font-size:29.04px;color:#202d3d;font-weight:400;transform:scaleX(0.9434);transform-origin:left top;">Status changed from Processing to</div>
<div class="t" style="left:1810.3px;top:1553.41px;font-size:29.04px;color:#202d3d;font-weight:400;transform:scaleX(0.9434);transform-origin:left top;">Attention Required</div>
<div class="t" style="right:113px;top:1536.91px;font-size:29.04px;color:#202d3d;font-weight:400;transform:scaleX(0.9434);transform-origin:right top;">Feb 19, 2025, 1:30:55&#8239;PM</div>
<div style="position:absolute;left:96px;top:1592px;width:2832px;height:2px;background:#e5e5e5"></div>
<div class="t" style="left:128.2px;top:1618.91px;font-size:29.04px;color:#202d3d;font-weight:400;transform:scaleX(0.9434);transform-origin:left top;">Translate</div>
<div class="t" style="left:677.8px;top:1618.91px;font-size:29.04px;color:#202d3d;font-weight:400;transform:scaleX(0.9434);transform-origin:left top;">Status Change</div>
<div class="t" style="left:1244px;top:1618.91px;font-size:29.04px;color:#202d3d;font-weight:400;transform:scaleX(0.8774);transform-origin:left top;">SYSTEM</div>
<div class="t" style="left:1810.3px;top:1603.31px;font-size:29.04px;color:#202d3d;font-weight:400;transform:scaleX(0.9434);transform-origin:left top;">Step status changed from Processing to</div>
<div class="t" style="left:1810.3px;top:1635.41px;font-size:29.04px;color:#202d3d;font-weight:400;transform:scaleX(0.9434);transform-origin:left top;">Stopped</div>
<div class="t" style="right:113px;top:1618.91px;font-size:29.04px;color:#202d3d;font-weight:400;transform:scaleX(0.9434);transform-origin:right top;">Feb 19, 2025, 1:30:55&#8239;PM</div>
<div style="position:absolute;left:96px;top:1674px;width:2832px;height:2px;background:#aab2bc"></div>
</body></html>
